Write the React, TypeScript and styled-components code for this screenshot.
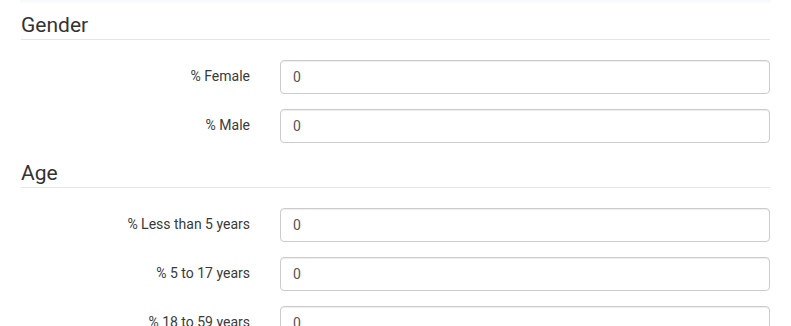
import React from "react";
import styled, { createGlobalStyle } from "styled-components";

const Global = createGlobalStyle`
  html, body { margin: 0; padding: 0; background: #fff; }
  body { font-family: Roboto, "Liberation Sans", Arial, sans-serif; color: #333; font-size: 14px; line-height: 1.42857; }
  * { box-sizing: border-box; }
`;

const Page = styled.div`
  padding: 0 21px 0 21px;
  height: 326px;
  overflow: hidden;
`;

const PanelEdge = styled.div`
  height: 10px;
  margin: 0 -1px;
  background: linear-gradient(#f6f7fc, #fff 4px);
`;

const Fieldset = styled.fieldset`
  border: 0;
  margin: 0;
  padding: 0;
  min-width: 0;
`;

const Legend = styled.legend`
  display: block;
  width: 100%;
  padding: 1px 0 0;
  margin: 0 0 20px;
  font-size: 21px;
  line-height: 28px;
  font-weight: 400;
  color: #333;
  border-bottom: 1px solid #e5e5e5;
`;

const Group = styled.div`
  display: grid;
  grid-template-columns: 229px 1fr;
  column-gap: 30px;
  margin-bottom: 15px;
`;

const Label = styled.label`
  text-align: right;
  padding-top: 6px;
  font-size: 14px;
  line-height: 20px;
  color: #3a3a3a;
`;

const Input = styled.input`
  display: block;
  width: 100%;
  height: 34px;
  padding: 6px 12px;
  font-family: Roboto, "Liberation Sans", Arial, sans-serif;
  font-size: 14px;
  color: #555;
  background: #fff;
  border: 1px solid #ccc;
  border-radius: 4px;
  box-shadow: inset 0 1px 1px rgba(0, 0, 0, 0.075);
  outline: none;
`;

const sections = [
  { title: "Gender", fields: ["% Female", "% Male"] },
  { title: "Age", fields: ["% Less than 5 years", "% 5 to 17 years", "% 18 to 59 years"] },
];

export default function App() {
  return (
    <>
      <Global />
      <Page>
        <PanelEdge />
        {sections.map((s) => (
          <Fieldset key={s.title}>
            <Legend>{s.title}</Legend>
            {s.fields.map((f) => (
              <Group key={f}>
                <Label>{f}</Label>
                <Input type="text" defaultValue="0" />
              </Group>
            ))}
          </Fieldset>
        ))}
      </Page>
    </>
  );
}
